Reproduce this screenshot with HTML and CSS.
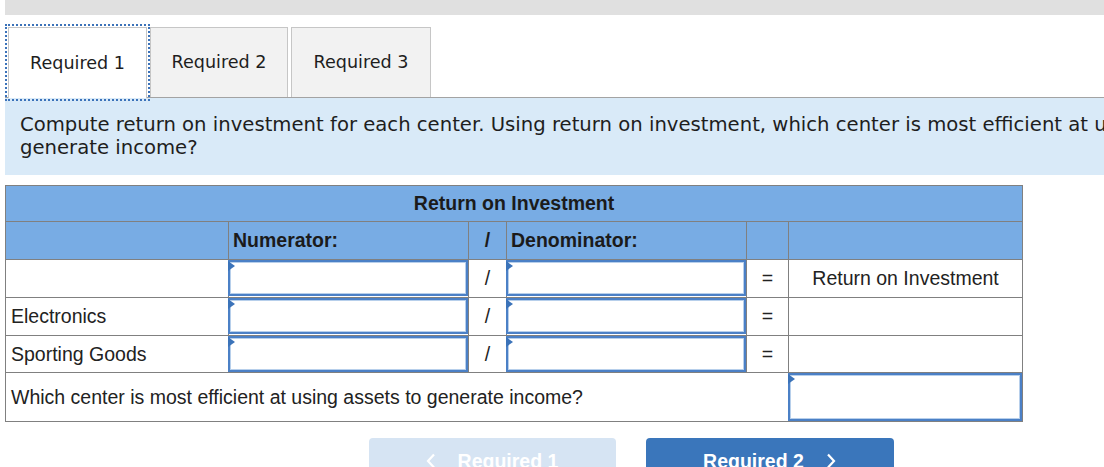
FILE: index.html
```html
<!DOCTYPE html>
<html lang="en">
<head>
<meta charset="utf-8">
<title>Return on Investment</title>
<link rel="stylesheet" href="styles.css">
</head>
<body>
<div class="page">
  <div class="topbar"></div>
  <div class="tabs">
    <button class="tab tab-1 active">Required 1</button>
    <button class="tab tab-2">Required 2</button>
    <button class="tab tab-3">Required 3</button>
  </div>
  <div class="prompt">Compute return on investment for each center. Using return on investment, which center is most efficient at using assets to generate income?</div>
  <table class="roi">
    <colgroup>
      <col class="c-label"><col class="c-num"><col class="c-op"><col class="c-den"><col class="c-eq"><col class="c-res">
    </colgroup>
    <tr class="r-title"><th colspan="6" class="title">Return on Investment</th></tr>
    <tr class="r-head">
      <th></th>
      <th class="left">Numerator:</th>
      <th class="op">/</th>
      <th class="left">Denominator:</th>
      <th></th>
      <th></th>
    </tr>
    <tr class="r-row">
      <td></td>
      <td class="in"><div class="field"></div></td>
      <td class="op">/</td>
      <td class="in"><div class="field"></div></td>
      <td class="op">=</td>
      <td class="res">Return on Investment</td>
    </tr>
    <tr class="r-row">
      <td class="label">Electronics</td>
      <td class="in"><div class="field"></div></td>
      <td class="op">/</td>
      <td class="in"><div class="field"></div></td>
      <td class="op">=</td>
      <td></td>
    </tr>
    <tr class="r-row r-short">
      <td class="label">Sporting Goods</td>
      <td class="in"><div class="field"></div></td>
      <td class="op">/</td>
      <td class="in"><div class="field"></div></td>
      <td class="op">=</td>
      <td></td>
    </tr>
    <tr class="r-last">
      <td colspan="5" class="label">Which center is most efficient at using assets to generate income?</td>
      <td class="in"><div class="field field-tall"></div></td>
    </tr>
  </table>
  <div class="nav">
    <button class="navbtn prev"><svg class="chev" viewBox="0 0 10 16" width="10" height="16"><polyline points="8,1.5 2,8 8,14.5" fill="none" stroke="#fff" stroke-width="2.2"/></svg><span>Required 1</span></button>
    <button class="navbtn next"><span>Required 2</span><svg class="chev" viewBox="0 0 10 16" width="10" height="16"><polyline points="2,1.5 8,8 2,14.5" fill="none" stroke="#fff" stroke-width="2.2"/></svg></button>
  </div>
</div>
</body>
</html>
```
FILE: styles.css
```css
html, body {
  margin: 0;
  padding: 0;
  background: #fff;
  overflow: hidden;
}
.page {
  width: 1252px;
  padding-left: 5px;
  font-family: "DejaVu Sans", Verdana, sans-serif;
  color: #1e1e1e;
}
.topbar {
  height: 15px;
  background: #e0e0e0;
}
.tabs {
  display: flex;
  gap: 3px;
  margin-top: 12px;
  padding-left: 3px;
  border-bottom: 1px solid #a3a3a3;
  height: 70px;
}
.tab {
  box-sizing: border-box;
  height: 70px;
  border: 1px solid #c6c6c6;
  border-bottom: none;
  background: #f2f2f2;
  font-family: "DejaVu Sans", Verdana, sans-serif;
  font-size: 17.6px;
  color: #1e1e1e;
  padding: 0;
  padding-bottom: 1px;
}
.tab-1 { width: 139px; }
.tab-2 { width: 138px; }
.tab-3 { width: 140px; }
.tab.active {
  background: #fff;
  height: 71px;
  outline: 2px dotted #3b72b9;
  outline-offset: 1px;
  position: relative;
}
.prompt {
  background: #d9eaf8;
  padding: 15px 0 16px 15px;
  margin-right: -20px;
  font-size: 19.65px;
  line-height: 23px;
  color: #1e1e1e;
}
.roi {
  margin-top: 10px;
  width: 1017px;
  border-collapse: collapse;
  table-layout: fixed;
  font-family: "Liberation Sans", Arial, sans-serif;
  font-size: 19.5px;
  color: #222;
}
.c-label { width: 223px; }
.c-num { width: 240px; }
.c-op { width: 38px; }
.c-den { width: 240px; }
.c-eq { width: 42px; }
.c-res { width: 234px; }
.roi th, .roi td {
  border: 1px solid #808080;
  padding: 0;
}
.roi th {
  background: #78ace4;
  font-weight: bold;
  color: #1b1b1b;
}
.r-title { height: 36px; }
.r-head { height: 38px; }
.r-row { height: 38px; }
.r-short { height: 36px; }
.r-last { height: 49px; }
.roi th.left { text-align: left; padding-left: 4px; }
.roi .op { text-align: center; }
.roi .res { text-align: center; }
.roi .label { padding-left: 5px; }
.roi td.in { vertical-align: top; }
.field {
  position: relative;
  box-sizing: border-box;
  height: 36px;
  margin-left: -1px;
  border: 2px solid #4b80c6;
  box-shadow: inset 0 0 0 1px #b7cfeb;
  background: #fff;
}
.field-tall { height: 48px; }
.field::before {
  content: "";
  position: absolute;
  top: -1px;
  left: -2px;
  border-top: 5px solid transparent;
  border-bottom: 5px solid transparent;
  border-left: 7px solid #3b73b9;
}
.nav {
  display: flex;
  justify-content: center;
  gap: 30px;
  margin-top: 16px;
}
.navbtn {
  box-sizing: border-box;
  width: 247px;
  height: 46px;
  border: none;
  border-radius: 4px;
  display: flex;
  align-items: center;
  justify-content: center;
  gap: 22px;
  font-family: "Liberation Sans", Arial, sans-serif;
  font-weight: bold;
  font-size: 19.5px;
  color: #fff;
  padding: 0;
}
.navbtn.prev { background: #d6e4f3; }
.navbtn.next { background: #3a76bb; width: 248px; }
.chev { display: block; }
```
